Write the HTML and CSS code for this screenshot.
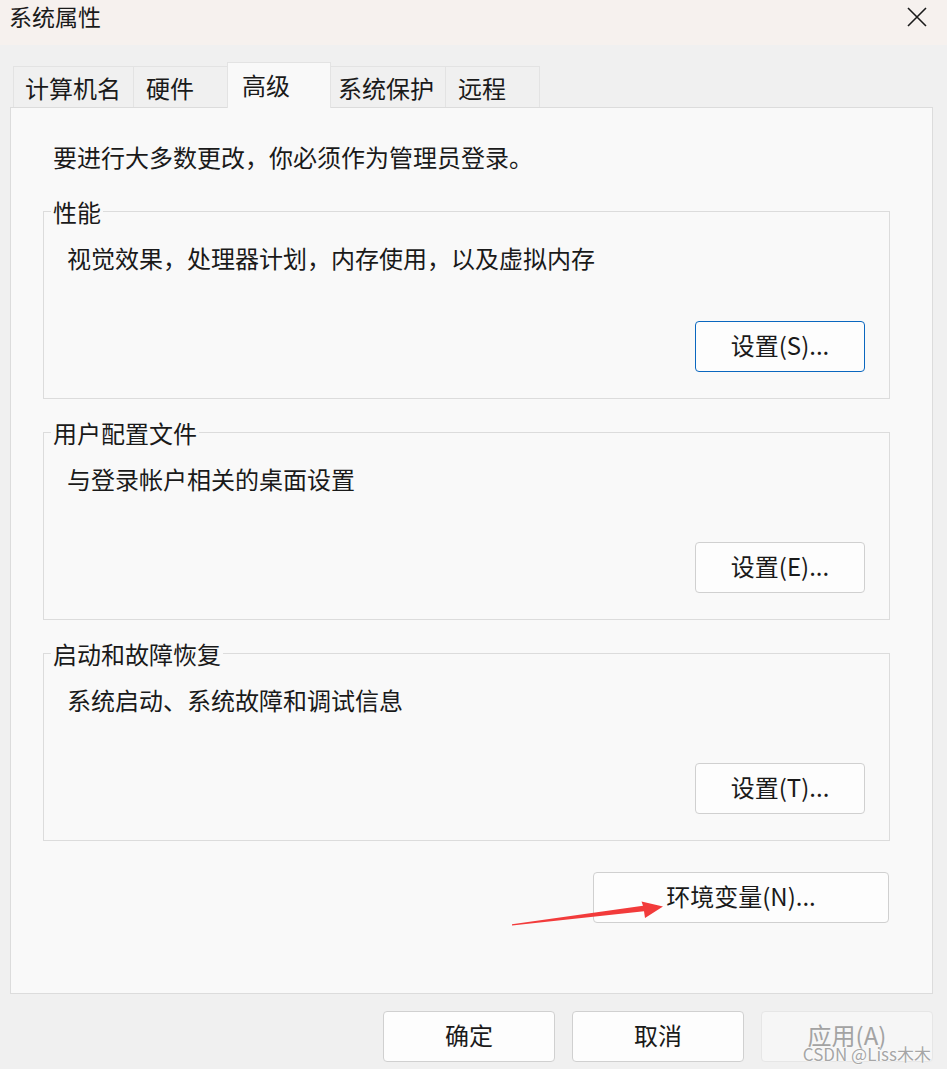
FILE: index.html
```html
<!DOCTYPE html>
<html lang="zh-CN">
<head>
<meta charset="utf-8">
<title>系统属性</title>
<link rel="stylesheet" href="styles.css">
</head>
<body>
<div class="window">
  <div class="titlebar">
    <span class="title">系统属性</span>
    <span class="close" aria-label="关闭">
      <svg width="20" height="20" viewBox="0 0 20 20"><path d="M1 1 L19 19 M19 1 L1 19" stroke="#1a1a1a" stroke-width="1.6" fill="none"/></svg>
    </span>
  </div>

  <div class="tabs">
    <div class="tab tab-1">计算机名</div>
    <div class="tab tab-2">硬件</div>
    <div class="tab tab-3 active">高级</div>
    <div class="tab tab-4">系统保护</div>
    <div class="tab tab-5">远程</div>
  </div>

  <div class="panel">
    <div class="intro">要进行大多数更改，你必须作为管理员登录。</div>

    <div class="group">
      <div class="group-title">性能</div>
      <div class="group-desc">视觉效果，处理器计划，内存使用，以及虚拟内存</div>
      <div class="group-actions"><button class="btn btn-set focused">设置(S)...</button></div>
    </div>

    <div class="group">
      <div class="group-title">用户配置文件</div>
      <div class="group-desc">与登录帐户相关的桌面设置</div>
      <div class="group-actions"><button class="btn btn-set">设置(E)...</button></div>
    </div>

    <div class="group">
      <div class="group-title">启动和故障恢复</div>
      <div class="group-desc">系统启动、系统故障和调试信息</div>
      <div class="group-actions"><button class="btn btn-set">设置(T)...</button></div>
    </div>

    <div class="env-row"><button class="btn btn-env">环境变量(N)...</button></div>
  </div>

  <div class="footer">
    <button class="btn btn-foot">确定</button>
    <button class="btn btn-foot">取消</button>
    <button class="btn btn-foot disabled">应用(A)</button>
  </div>

  <div class="watermark">CSDN @Liss木木</div>

  <svg class="arrow" width="947" height="1069" viewBox="0 0 947 1069">
    <polygon points="512,925.5 644,911.2 645,918 663,906.5 641.5,901.5 643,905.8 512,924.3" fill="#f23b3b"/>
  </svg>
</div>
</body>
</html>
```

FILE: styles.css
```css
* { box-sizing: border-box; }

html, body {
  margin: 0;
  padding: 0;
}

body {
  width: 947px;
  height: 1069px;
  overflow: hidden;
  background: #f0f0f0;
  font-family: "Noto Sans CJK SC", "Noto Sans", sans-serif;
  color: #1a1a1a;
}

.window {
  position: relative;
  width: 947px;
  height: 1069px;
}

.titlebar {
  height: 45px;
  background: #f6f1ee;
  display: flex;
  justify-content: space-between;
  align-items: flex-start;
}

.title {
  padding-left: 9px;
  font-size: 23px;
  line-height: 33px;
}

.close {
  display: flex;
  padding: 7px 20px 0 0;
}

.tabs {
  margin-top: 17px;
  height: 45px;
  padding-left: 13px;
  display: flex;
  align-items: flex-end;
}

.tab {
  height: 41px;
  border: 1px solid #e3e3e3;
  border-bottom: none;
  margin-right: -1px;
  background: #f0f0f0;
  font-size: 24px;
  line-height: 32px;
  padding-top: 5px;
  white-space: nowrap;
}

.tab-1 { width: 121px; padding-left: 11px; }
.tab-2 { width: 95px; padding-left: 12px; }
.tab-3 { width: 104px; padding-left: 14px; }
.tab-4 { width: 116px; padding-left: 7px; }
.tab-5 { width: 95px; padding-left: 12px; }

.tab.active {
  position: relative;
  z-index: 1;
  height: 46px;
  margin-bottom: -1px;
  background: #f9f9f9;
  padding-top: 6px;
}

.panel {
  margin-left: 10px;
  width: 923px;
  height: 887px;
  background: #f9f9f9;
  border: 1px solid #dcdcdc;
  padding: 33px 0 0 32px;
}

.intro {
  font-size: 24px;
  line-height: 32px;
  padding-left: 10px;
}

.group {
  width: 847px;
  height: 188px;
  margin-top: 38px;
  border: 1px solid #dcdcdc;
}

.group + .group {
  margin-top: 33px;
}

.group-title {
  width: fit-content;
  margin: -16px 0 0 7px;
  padding: 0 2px;
  background: #f9f9f9;
  font-size: 24px;
  line-height: 32px;
}

.group-desc {
  margin-top: 14px;
  padding-left: 23px;
  font-size: 24px;
  line-height: 32px;
}

.group-actions {
  margin-top: 47px;
  display: flex;
  justify-content: flex-end;
  padding-right: 24px;
}

.btn {
  height: 51px;
  background: #fdfdfd;
  border: 1px solid #d0d0d0;
  border-radius: 4px;
  font-family: "Noto Sans CJK SC", "Noto Sans", sans-serif;
  font-size: 24px;
  line-height: 45px;
  padding: 0 0 4px 0;
  color: #1a1a1a;
  text-align: center;
}

.btn-set { width: 170px; }

.btn.focused {
  border-color: #0a67bf;
}

.env-row {
  width: 847px;
  margin-top: 31px;
  display: flex;
  justify-content: flex-end;
  padding-right: 1px;
}

.btn-env { width: 296px; }

.footer {
  margin-top: 17px;
  display: flex;
  justify-content: flex-end;
  gap: 17px;
  padding-right: 14px;
}

.btn-foot { width: 172px; }

.btn.disabled {
  background: #f6f6f6;
  border-color: #e6e6e6;
  color: #a3a3a3;
}

.watermark {
  position: absolute;
  right: 16px;
  bottom: 5px;
  font-size: 17px;
  line-height: 20px;
  color: #a6a6a6;
  text-shadow: 0 0 2px #ffffff, 0 0 2px #ffffff;
  white-space: nowrap;
}

.arrow {
  position: absolute;
  left: 0;
  top: 0;
  pointer-events: none;
}
```
